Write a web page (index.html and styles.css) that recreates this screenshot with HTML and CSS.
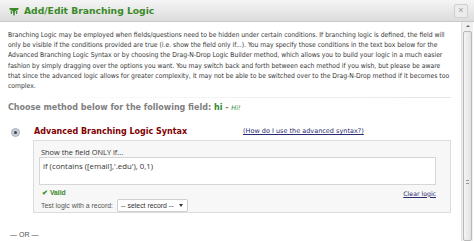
FILE: index.html
```html
<!DOCTYPE html>
<html>
<head>
<meta charset="utf-8">
<link rel="stylesheet" href="styles.css">
</head>
<body>
<div class="dialog">
  <div class="titlebar">
    <svg class="title-icon" width="10" height="9" viewBox="0 0 10 9">
      <path d="M0.5 1 L9.5 1 L9.5 2.6 L6 4.2 L5.6 8.5 L4.4 8.5 L4 4.2 L0.5 2.6 Z" fill="#3a8a28"/>
      <path d="M1.5 3.4 L3.2 4.6 L3 7 L2 7 Z" fill="#3a8a28"/>
      <path d="M8.5 3.4 L6.8 4.6 L7 7 L8 7 Z" fill="#3a8a28"/>
    </svg>
    <span class="title">Add/Edit Branching Logic</span>
    <span class="close">×</span>
  </div>
  <div class="body">
    <div class="content">
      <p class="intro">Branching Logic may be employed when fields/questions need to be hidden under certain conditions. If branching logic is defined, the field will only be visible if the conditions provided are true (i.e. show the field only if...). You may specify those conditions in the text box below for the Advanced Branching Logic Syntax or by choosing the Drag-N-Drop Logic Builder method, which allows you to build your logic in a much easier fashion by simply dragging over the options you want. You may switch back and forth between each method if you wish, but please be aware that since the advanced logic allows for greater complexity, it may not be able to be switched over to the Drag-N-Drop method if it becomes too complex.</p>
      <div class="choose">Choose method below for the following field: <b class="fname">hi</b> - <i class="flabel">Hi!</i></div>
      <div class="method">
        <div class="method-head">
          <span class="radio"><span class="radio-dot"></span></span>
          <span class="method-title">Advanced Branching Logic Syntax</span>
          <a class="help" href="#">(How do I use the advanced syntax?)</a>
        </div>
        <div class="logic-box">
          <div class="logic-label">Show the field ONLY if...</div>
          <div class="logic-input">if (contains ([email],'.edu'), 0,1)</div>
          <div class="status-row">
            <span class="valid">✔ Valid</span>
            <a class="clear" href="#">Clear logic</a>
          </div>
          <div class="test-row">
            <span>Test logic with a record:</span>
            <span class="select">-- select record --<span class="caret"></span></span>
          </div>
        </div>
      </div>
      <div class="or">— OR —</div>
    </div>
    <div class="scrollbar">
      <div class="sb-arrow"></div>
      <div class="sb-thumb"><span class="grip"></span></div>
    </div>
  </div>
</div>
</body>
</html>
```
FILE: styles.css
```css
html, body {
  margin: 0;
  padding: 0;
  background: #ffffff;
}
body {
  width: 474px;
  height: 241px;
  overflow: hidden;
  font-family: "DejaVu Sans", sans-serif;
}
.dialog {
  width: 474px;
  height: 241px;
  display: flex;
  flex-direction: column;
  overflow: hidden;
}
.titlebar {
  height: 22px;
  flex: none;
  display: flex;
  align-items: center;
  padding: 0 6px 0 9px;
  background: linear-gradient(#f5f5f5, #dcdcdc);
  border-bottom: 1px solid #c8c8c8;
  box-sizing: border-box;
}
.title-icon {
  margin-right: 5px;
  margin-top: 1px;
}
.title {
  font-family: "DejaVu Sans", sans-serif;
  font-weight: bold;
  font-size: 9.2px;
  color: #3a8a28;
  flex: 1;
}
.close {
  width: 12px;
  height: 12px;
  border: 1px solid #d0d0d0;
  border-radius: 2px;
  background: #ececec;
  color: #999;
  font-size: 9px;
  line-height: 11px;
  text-align: center;
  font-family: "Liberation Sans", sans-serif;
}
.body {
  flex: 1;
  display: flex;
  min-height: 0;
}
.content {
  flex: 1;
  padding: 0 10px 0 8px;
  min-width: 0;
}
.intro {
  margin: 8px -2px 0 0;
  font-family: "DejaVu Sans Condensed", "DejaVu Sans", sans-serif;
  font-stretch: condensed;
  font-size: 6.78px;
  line-height: 10.2px;
  color: #333;
}
.choose {
  margin-top: 6px;
  padding-top: 4px;
  background: linear-gradient(to right, rgba(230,230,230,0), #e6e6e6) top left / 100% 1px no-repeat;
  font-family: "DejaVu Sans", sans-serif;
  font-weight: bold;
  font-size: 8px;
  line-height: 14px;
  color: #808080;
}
.fname {
  color: #2e8b2e;
}
.flabel {
  color: #2e8b2e;
  font-weight: normal;
  font-size: 6.5px;
}
.method {
  margin-top: 10px;
}
.method-head {
  display: flex;
  align-items: center;
  height: 12px;
}
.radio {
  width: 7px;
  height: 7px;
  border-radius: 50%;
  background: #c9ced6;
  border: 1px solid #aab0b8;
  margin-left: 3px;
  margin-right: 14px;
  display: flex;
  align-items: center;
  justify-content: center;
  margin-top: 3px;
}
.radio-dot {
  width: 3px;
  height: 3px;
  border-radius: 50%;
  background: #3d4450;
}
.method-title {
  font-family: "DejaVu Sans", sans-serif;
  font-weight: bold;
  font-size: 8px;
  color: #800000;
  width: 209px;
}
.help {
  font-family: "DejaVu Sans", sans-serif;
  font-size: 6.5px;
  color: #2a2a70;
  text-decoration: underline;
}
.logic-box {
  margin: 3px 0 0 25px;
  border: 1px solid #dcdcdc;
  background: #f7f7f7;
  padding: 6px 14px 0 5px;
}
.logic-label {
  font-family: "Open Sans", sans-serif;
  font-size: 7.4px;
  line-height: 10px;
  color: #333;
  padding-left: 2px;
}
.logic-input {
  margin-top: 0;
  height: 28px;
  box-sizing: border-box;
  border: 1px solid #d6d6d6;
  background: #fff;
  padding: 3px 3px;
  font-family: "Open Sans", sans-serif;
  font-size: 7.8px;
  line-height: 10px;
  color: #333;
}
.status-row {
  display: flex;
  justify-content: space-between;
  align-items: center;
  height: 10px;
  margin-top: 3px;
  padding-left: 3px;
}
.valid {
  font-family: "Liberation Sans", sans-serif;
  font-weight: bold;
  font-size: 6.8px;
  color: #3a8a28;
}
.clear {
  font-family: "DejaVu Sans", sans-serif;
  font-size: 6.2px;
  color: #2a2a70;
  text-decoration: underline;
}
.test-row {
  display: flex;
  align-items: center;
  gap: 4px;
  height: 14px;
  padding-left: 2px;
  font-family: "Liberation Sans", sans-serif;
  font-size: 6.9px;
  color: #555;
}
.select {
  display: inline-flex;
  align-items: center;
  justify-content: space-between;
  width: 71px;
  height: 13px;
  box-sizing: border-box;
  border: 1px solid #cfcfcf;
  border-radius: 2px;
  background: #fff;
  padding: 0 4px 0 3px;
  color: #333;
}
.caret {
  width: 0;
  height: 0;
  border-left: 2.5px solid transparent;
  border-right: 2.5px solid transparent;
  border-top: 3px solid #333;
}
.or {
  margin-top: 18px;
  padding-left: 2px;
  font-family: "Liberation Sans", sans-serif;
  font-size: 7px;
  color: #555;
}
.scrollbar {
  width: 11px;
  flex: none;
  margin-right: 1px;
  display: flex;
  flex-direction: column;
  align-items: center;
  background: #f0f0f0;
  border-left: 1px solid #e0e0e0;
  padding-top: 3px;
}
.sb-arrow {
  width: 0;
  height: 0;
  border-left: 2px solid transparent;
  border-right: 2px solid transparent;
  border-bottom: 2px solid #666;
  margin-bottom: 4px;
}
.sb-thumb {
  width: 9px;
  flex: 1;
  box-sizing: border-box;
  border: 1px solid #b8b8b8;
  border-radius: 2px;
  background: linear-gradient(to right, #f4f4f4, #e2e2e2);
  display: flex;
  justify-content: center;
  padding-top: 148px;
}
.grip {
  width: 3px;
  height: 4px;
  border-top: 1px solid #999;
  border-bottom: 1px solid #999;
  box-sizing: border-box;
}
```
